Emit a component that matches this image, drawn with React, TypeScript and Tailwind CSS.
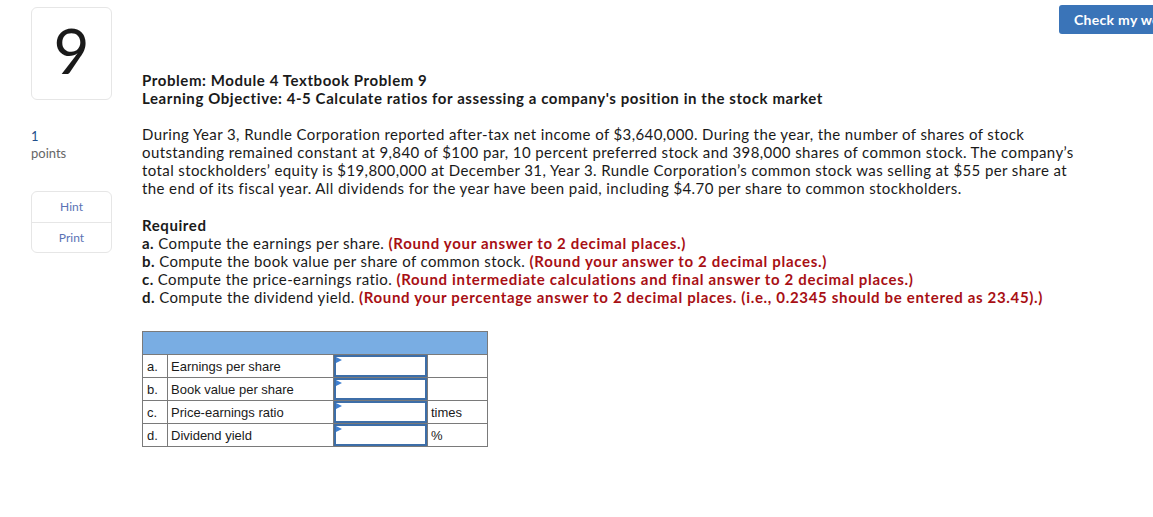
import React from 'react';

const rows = [
    { key: 'a.', label: 'Earnings per share', unit: '' },
    { key: 'b.', label: 'Book value per share', unit: '' },
    { key: 'c.', label: 'Price-earnings ratio', unit: 'times' },
    { key: 'd.', label: 'Dividend yield', unit: '%' },
];

const required = [
    { key: 'a.', text: 'Compute the earnings per share.', note: '(Round your answer to 2 decimal places.)' },
    { key: 'b.', text: 'Compute the book value per share of common stock.', note: '(Round your answer to 2 decimal places.)' },
    { key: 'c.', text: 'Compute the price-earnings ratio.', note: '(Round intermediate calculations and final answer to 2 decimal places.)' },
    { key: 'd.', text: 'Compute the dividend yield.', note: '(Round your percentage answer to 2 decimal places. (i.e., 0.2345 should be entered as 23.45).)' },
];

const Sidebar: React.FC = () => (
    <div className="w-[81px] shrink-0 flex flex-col">
        <div className="h-[93px] mt-[7px] rounded-md border border-[#e6e6e6] flex items-center justify-center">
            <span className="text-[62px] leading-none text-[#1a1a1a] -mt-[8px]">9</span>
        </div>
        <div className="mt-[28px] text-[13px] leading-[17px]">
            <div className="text-[#1f4f8c]">1</div>
            <div className="text-[#666]">points</div>
        </div>
        <div className="mt-[29px] rounded-md border border-[#e6e6e6] text-[12px] text-[#5a72b5]">
            <div className="h-[31px] flex items-center justify-center border-b border-[#e6e6e6]">Hint</div>
            <div className="h-[29px] flex items-center justify-center">Print</div>
        </div>
    </div>
);

const AnswerTable: React.FC = () => (
    <table className="mt-[25px] border-collapse font-['Liberation_Sans',Arial,sans-serif] text-[13px] text-[#1a1a1a] tracking-normal">
        <thead>
            <tr>
                <th colSpan={4} className="h-[23px] bg-[#79ade3] border border-[#7a7a7a]" />
            </tr>
        </thead>
        <tbody>
            {rows.map((r) => (
                <tr key={r.key} className="h-[23px]">
                    <td className="w-[25px] border border-[#7a7a7a] pl-[4px] pt-[1px]">{r.key}</td>
                    <td className="w-[166px] border border-[#7a7a7a] pl-[3px] pt-[1px]">{r.label}</td>
                    <td className="w-[94px] border border-[#7a7a7a] p-0">
                        <div className="relative h-[22px] border-2 border-[#3d6ea8]">
                            <svg className="absolute left-0 top-0" width="6" height="6" viewBox="0 0 6 6">
                                <polygon points="0,0 6,3 0,6" fill="#3f7fd0" />
                            </svg>
                        </div>
                    </td>
                    <td className="w-[60px] border border-[#7a7a7a] pl-[3px] pt-[1px]">{r.unit}</td>
                </tr>
            ))}
        </tbody>
    </table>
);

export default function App() {
    return (
        <div className="relative w-[1153px] h-[517px] bg-white overflow-hidden font-['Lato','Noto_Sans',sans-serif]">
            <button className="absolute left-[1059px] top-[5px] h-[29px] px-[15px] rounded-[3px] bg-[#3a74b8] text-white text-[14px] font-bold tracking-[0.3px] whitespace-nowrap">
                Check my work
            </button>
            <div className="flex pl-[31px] gap-[30px]">
                <Sidebar />
                <div className="pt-[71px] text-[15px] text-[#1a1a1a] tracking-[0.4px]">
                    <div className="font-bold leading-[18px] tracking-[0.58px]">
                        <div>Problem: Module 4 Textbook Problem 9</div>
                        <div>Learning Objective: 4-5 Calculate ratios for assessing a company's position in the stock market</div>
                    </div>
                    <p className="mt-[18px] leading-[18px] w-[980px]">
                        During Year 3, Rundle Corporation reported after-tax net income of $3,640,000. During the year, the number of shares of stock<br />
                        outstanding remained constant at 9,840 of $100 par, 10 percent preferred stock and 398,000 shares of common stock. The company’s<br />
                        total stockholders’ equity is $19,800,000 at December 31, Year 3. Rundle Corporation’s common stock was selling at $55 per share at<br />
                        the end of its fiscal year. All dividends for the year have been paid, including $4.70 per share to common stockholders.
                    </p>
                    <div className="mt-[19px] leading-[18px]">
                        <div className="font-bold tracking-[0.58px]">Required</div>
                        {required.map((q) => (
                            <div key={q.key}>
                                <span className="font-bold">{q.key}</span> {q.text}{' '}
                                <span className="font-bold text-[#a80f14] tracking-[0.68px]">{q.note}</span>
                            </div>
                        ))}
                    </div>
                    <AnswerTable />
                </div>
            </div>
        </div>
    );
}
